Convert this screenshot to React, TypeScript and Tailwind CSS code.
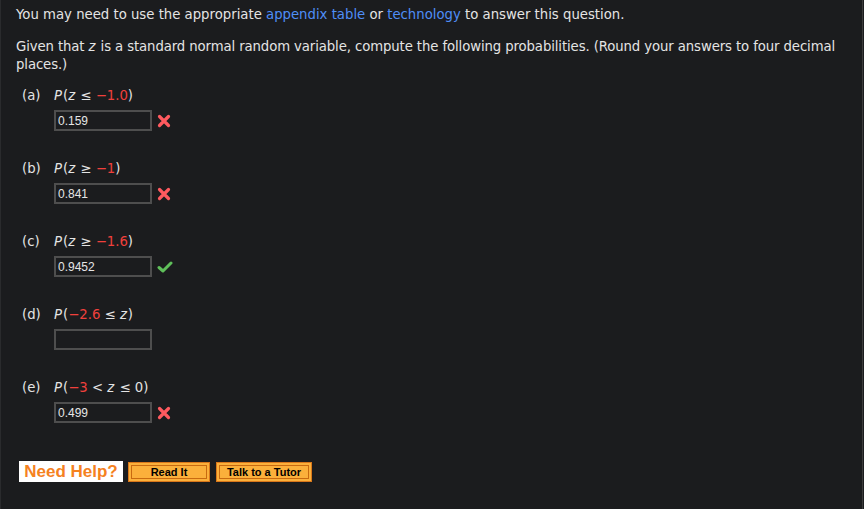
import React from "react";

const Cross = () => (
  <svg width="14" height="14" viewBox="0 0 14 14" className="ml-[5px]">
    <path d="M2.5 2.5 L11.5 11.5 M11.5 2.5 L2.5 11.5" stroke="#ff5a5f" strokeWidth="3.2" strokeLinecap="round" />
  </svg>
);
const Check = () => (
  <svg width="16" height="14" viewBox="0 0 16 14" className="ml-[5px]">
    <path d="M2 7.5 L6 11 L14 3" stroke="#5fbf5a" strokeWidth="3" fill="none" strokeLinecap="round" strokeLinejoin="round" />
  </svg>
);

const R = ({ children }: { children: React.ReactNode }) => <span className="text-[#f0403c]">{children}</span>;
const I = ({ children }: { children: React.ReactNode }) => <i className="pr-[1px]">{children}</i>;

function Item({ label, expr, value, mark }: { label: string; expr: React.ReactNode; value: string; mark?: "x" | "ok" }) {
  return (
    <div className="mt-[13px] pl-[6px]">
      <div className="flex h-[18px] items-center">
        <span className="w-[32px]">{label}</span>
        <span>{expr}</span>
      </div>
      <div className="ml-[32px] mt-[5px] flex items-center">
        <div className="flex h-[21px] w-[98px] items-center border-2 border-[#4e4e4e] pl-[2px] font-['Liberation_Sans',Arial,sans-serif] text-[12px] text-[#e6e6e6]">
          {value}
        </div>
        {mark === "x" && <Cross />}
        {mark === "ok" && <Check />}
      </div>
      <div className="h-[16px]" />
    </div>
  );
}

export default function App() {
  return (
    <div className="h-[509px] w-[864px] bg-[#1b1c1e] font-['DejaVu_Sans',Verdana,sans-serif] text-[13.25px] leading-[18px] text-[#e4e4e4]">
      <div className="flex h-full w-[863px] border-r border-l border-[#2a2b2d] border-r-[#3c3c3c]">
        <div className="w-full pl-[15px] pr-[2px] pt-[6px]">
          <p>
            You may need to use the appropriate <span className="text-[#4f8ef7]">appendix table</span> or{" "}
            <span className="text-[#4f8ef7]">technology</span> to answer this question.
          </p>
          <p className="mt-[14px] tracking-[-0.1px]">
            Given that <I>z</I>&nbsp;is a standard normal random variable, compute the following probabilities. (Round your answers to four decimal places.)
          </p>
          <div className="mt-[1px]">
            <Item label="(a)" expr={<><I>P</I>(<I>z</I> ≤ <R>−1.0</R>)</>} value="0.159" mark="x" />
            <Item label="(b)" expr={<><I>P</I>(<I>z</I> ≥ <R>−1</R>)</>} value="0.841" mark="x" />
            <Item label="(c)" expr={<><I>P</I>(<I>z</I> ≥ <R>−1.6</R>)</>} value="0.9452" mark="ok" />
            <Item label="(d)" expr={<><I>P</I>(<R>−2.6</R> ≤ <I>z</I>)</>} value="" />
            <Item label="(e)" expr={<><I>P</I>(<R>−3</R> &lt; <I>z</I> ≤ 0)</>} value="0.499" mark="x" />
          </div>
          <div className="mt-[22px] flex items-center pl-[3px] font-['Liberation_Sans',Arial,sans-serif]">
            <div className="flex h-[21px] w-[104px] items-center justify-center bg-white text-[17px] font-bold text-[#f5821f]">Need Help?</div>
            <button className="ml-[5px] h-[20px] w-[82px] border border-[#d9771a] bg-[#fbb03b] p-[2px]">
              <div className="flex h-full items-center justify-center border border-[#c86a10] text-[11px] font-bold text-black">Read It</div>
            </button>
            <button className="ml-[6px] h-[20px] w-[96px] border border-[#d9771a] bg-[#fbb03b] p-[2px]">
              <div className="flex h-full items-center justify-center border border-[#c86a10] text-[11px] font-bold text-black">Talk to a Tutor</div>
            </button>
          </div>
        </div>
      </div>
    </div>
  );
}
